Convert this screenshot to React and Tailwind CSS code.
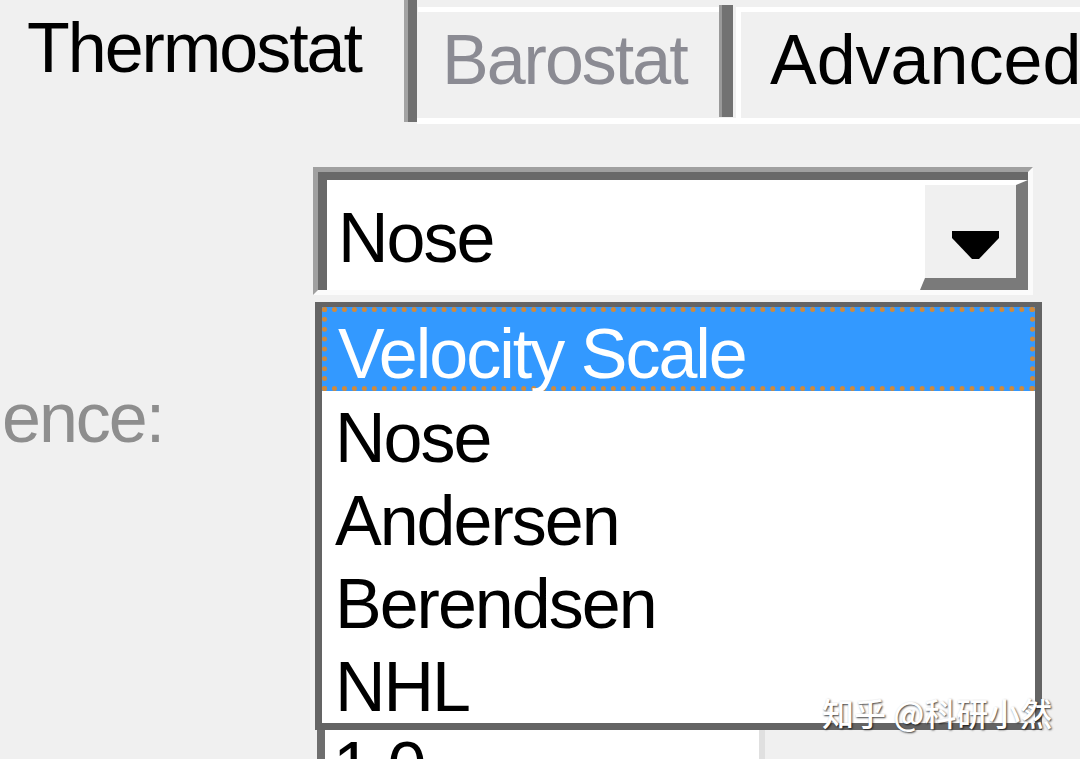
const items = ["Nose", "Andersen", "Berendsen", "NHL"];

function ArrowDown() {
  return (
    <svg width="47" height="28" viewBox="0 0 47 28">
      <path d="M0 0H47V7L27 28H20L0 7Z" fill="#000" />
    </svg>
  );
}

function ComboBox() {
  return (
    <div className="h-[128px] w-[720px] border-[5px] border-t-[#a0a0a0] border-l-[#a0a0a0] border-r-[#fbfbfb] border-b-[#fbfbfb]">
      <div className="flex h-full border-l-[9px] border-t-[8px] border-[#696969] bg-white">
        <div className="flex-1 pl-[11px] pt-[23px]">Nose</div>
        <div className="h-full w-[108px] border-t-[5px] border-l-[5px] border-r-[12px] border-b-[12px] border-t-white border-l-white border-r-[#7a7a7a] border-b-[#7a7a7a] bg-[#f0f0f0] pl-[27px] pt-[46px]">
          <ArrowDown />
        </div>
      </div>
    </div>
  );
}

export default function App() {
  return (
    <div className="relative h-[759px] w-[1080px] overflow-hidden bg-[#f0f0f0] font-['Liberation_Sans',Arial,sans-serif] text-[70px] leading-none tracking-[-2px] text-black">
      {/* tab strip */}
      <div className="flex h-[124px] items-start whitespace-nowrap">
        <div className="h-[122px] w-[404px] shrink-0 pl-[27px] pt-[13px]">Thermostat</div>
        <div className="h-[122px] w-[13px] shrink-0 border-l-[4px] border-[#a3a3a3] bg-[#707070]" />
        <div className="flex h-[124px] flex-1 items-start border-b-[6px] border-white pl-[1px]">
          <div className="mt-[7px] h-[111px] w-[301px] shrink-0 border-t-[5px] border-white pl-[24px] pt-[13px] text-[#8b8b93]">
            Barostat
          </div>
          <div className="mt-[5px] h-[112px] w-[14px] shrink-0 border-l-[3px] border-[#9a9a9a] bg-[#727272]" />
          <div className="ml-[3px] mt-[7px] h-[111px] flex-1 overflow-hidden border-l-[5px] border-t-[5px] border-white pl-[29px] pt-[13px] tracking-normal">
            Advanced
          </div>
        </div>
      </div>

      {/* form */}
      <div className="flex flex-col">
        <div className="pl-[313px] pt-[43px]">
          <ComboBox />
        </div>
        <div className="mt-[88px] pl-[2px] text-[#8e8e8e]">ence:</div>
        <div className="ml-[317px] mt-[277px] h-[60px] w-[448px] border-l-[8px] border-r-[6px] border-l-[#6e6e6e] border-r-[#e0e0e0] bg-white pl-[8px]">
          <div className="mt-[2px]">1.0</div>
        </div>
      </div>

      {/* open dropdown list */}
      <div className="absolute left-[315px] top-[302px] h-[428px] w-[727px] border-x-[7px] border-t-[5px] border-b-[7px] border-[#646464] bg-white">
        <div className="h-[84px] border-[5px] border-dotted border-[#cf8a3d] bg-[#3399ff] pl-[11px] pt-[7px] text-white">
          Velocity Scale
        </div>
        {items.map((item) => (
          <div key={item} className="h-[83px] pl-[13px] pt-[12px]">
            {item}
          </div>
        ))}
      </div>

      {/* watermark */}
      <div className="absolute left-[822px] top-[696px] font-['Noto_Sans_CJK_SC',sans-serif] text-[32px] font-medium leading-none tracking-normal text-white [text-shadow:1px_1px_2px_rgba(0,0,0,0.75)]">
        知乎 @科研小然
      </div>
    </div>
  );
}
